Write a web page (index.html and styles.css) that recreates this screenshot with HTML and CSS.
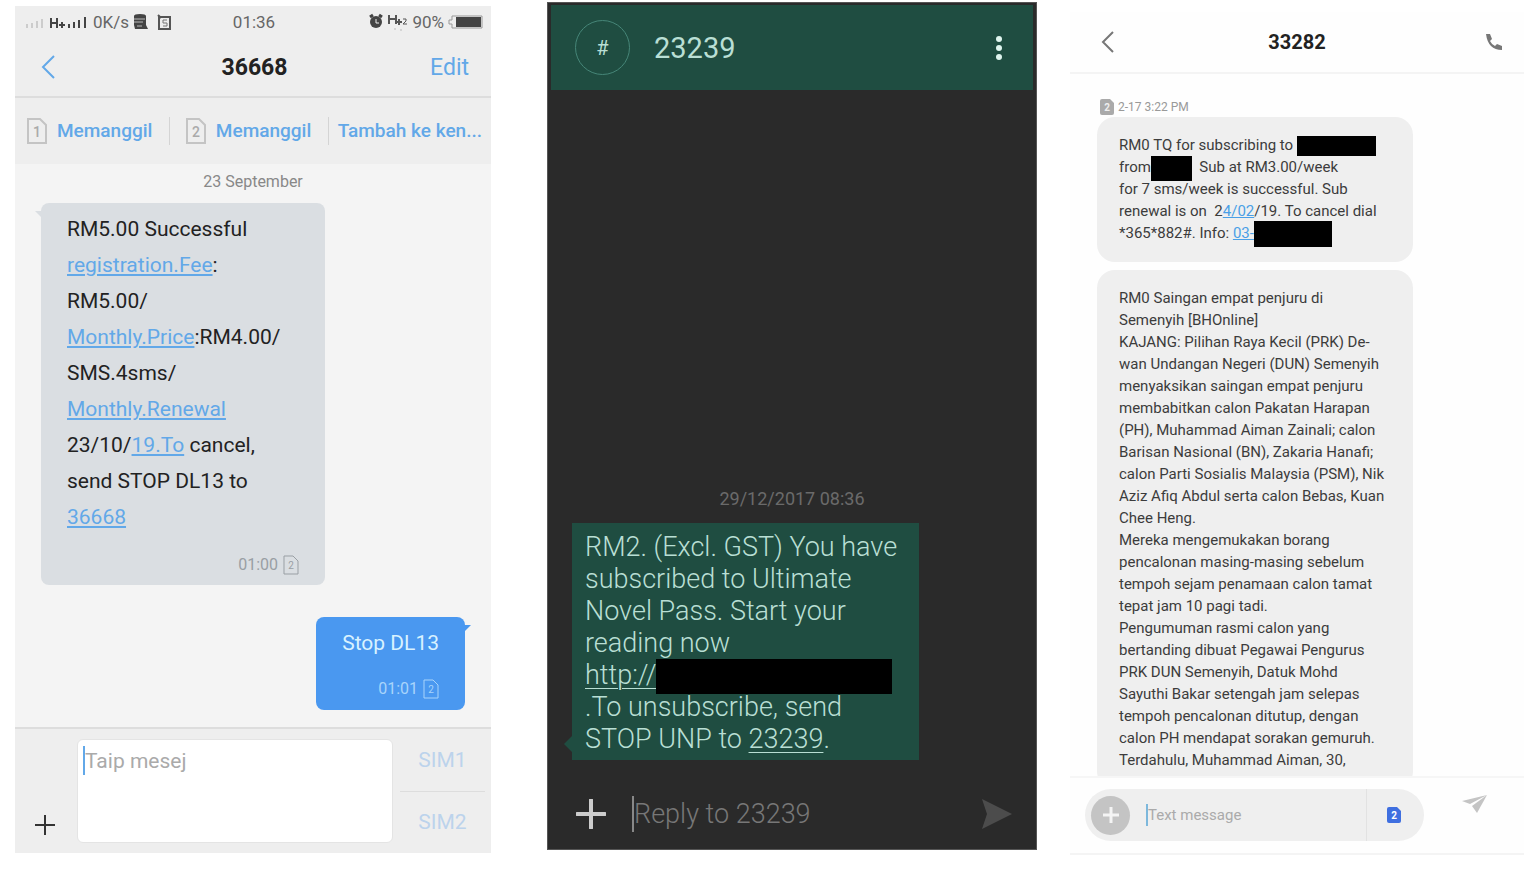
FILE: index.html
```
<!DOCTYPE html>
<html lang="ms">
<head>
    <meta charset="UTF-8">
    <meta name="viewport" content="width=device-width, initial-scale=1.0">
    <title>SMS</title>
    <link rel="stylesheet" href="styles.css">
</head>
<body>
    <main class="phones">

        <!-- 36668 -->
        <section class="phone phone-light">
            <div class="status-bar">
                <div class="status-left">
                    <svg width="64" height="18" viewBox="0 0 64 18">
                        <path d="M2 11v4M7 10v5M12 8v7M17 6v9" stroke="#ccc" stroke-width="2"/>
                        <path d="M26 5v10M32 5v10M26 10h7M37 9v6M34 12h6" stroke="#444" stroke-width="2" fill="none"/>
                        <path d="M44 11v4M49 9v6M54 7v8M60 4v11" stroke="#444" stroke-width="2"/>
                    </svg>
                    <span>0K/s</span>
                    <svg width="38" height="18" viewBox="0 0 38 18">
                        <path d="M1 3q0-2 6-2t6 2v9l2 4H2l-1-4z" fill="#444"/>
                        <path d="M1 6h11M1 9h9M4 13h5" stroke="#bbb" fill="none"/>
                        <path d="M26 4h11v12H26zM25 2l3 3" stroke="#555" stroke-width="2" fill="none"/>
                        <path d="M34 7h-4v3h4v3h-4" stroke="#777" fill="none"/>
                    </svg>
                </div>
                <span>01:36</span>
                <div class="status-right">
                    <svg width="42" height="20" viewBox="0 0 42 20">
                        <circle cx="10" cy="10" r="6" fill="#444"/>
                        <path d="M4 5l3-2M16 5l-3-2" stroke="#444" stroke-width="3"/>
                        <path d="M10 7v4h3" stroke="#eee" fill="none"/>
                        <path d="M23 3v9M30 3v9M23 7h7M33 7v6M31 10h5" stroke="#555" stroke-width="2" fill="none"/>
                        <path d="M37 7h3v2l-3 3h4" stroke="#555" fill="none"/>
                        <path d="M28 17h2M34 18h2" stroke="#bbb"/>
                    </svg>
                    <span>90%</span>
                    <svg width="35" height="14" viewBox="0 0 35 14">
                        <path d="M4 1h30v12H4V9H1V5h3z" fill="#eee" stroke="#999"/>
                        <path d="M8 2h25v10H8z" fill="#444"/>
                    </svg>
                </div>
            </div>
            <header class="light-header">
                <button class="icon-btn" type="button" aria-label="Kembali">
                    <svg width="16" height="26" viewBox="0 0 16 26"><path d="M14 2L3 13l11 11" fill="none" stroke="#62a8e8" stroke-width="2"/></svg>
                </button>
                <h1>36668</h1>
                <button class="edit-btn" type="button">Edit</button>
            </header>
            <nav class="quick-actions">
                <a href="#">
                    <svg width="20" height="26" viewBox="0 0 20 26"><path d="M1 1h12l6 6v18H1z" fill="none" stroke="#c4c4c4" stroke-width="2"/><text x="10" y="19" text-anchor="middle" font-size="14" fill="#aaa">1</text></svg>
                    Memanggil
                </a>
                <a href="#">
                    <svg width="20" height="26" viewBox="0 0 20 26"><path d="M1 1h12l6 6v18H1z" fill="none" stroke="#c4c4c4" stroke-width="2"/><text x="10" y="19" text-anchor="middle" font-size="14" fill="#aaa">2</text></svg>
                    Memanggil
                </a>
                <a href="#">Tambah ke ken...</a>
            </nav>
            <div class="light-chat">
                <p class="light-date">23 September</p>
                <div class="bubble received">
                    <p>RM5.00 Successful<br>
                    <a href="#">registration.Fee</a>:<br>
                    RM5.00/<br>
                    <a href="#">Monthly.Price</a>:RM4.00/<br>
                    SMS.4sms/<br>
                    <a href="#">Monthly.Renewal</a><br>
                    23/10/<a href="#">19.To</a> cancel,<br>
                    send STOP DL13 to<br>
                    <a href="#">36668</a></p>
                    <div class="bubble-time">01:00
                        <svg width="16" height="20" viewBox="0 0 16 20"><path d="M1 1h9l5 5v13H1z" fill="none" stroke="currentColor"/><text x="8" y="14" text-anchor="middle" font-size="10" fill="currentColor">2</text></svg>
                    </div>
                </div>
                <div class="bubble sent">
                    <p>Stop DL13</p>
                    <div class="bubble-time">01:01
                        <svg width="16" height="20" viewBox="0 0 16 20"><path d="M1 1h9l5 5v13H1z" fill="none" stroke="currentColor"/><text x="8" y="14" text-anchor="middle" font-size="10" fill="currentColor">2</text></svg>
                    </div>
                </div>
            </div>
            <form class="light-composer">
                <button class="icon-btn add-btn" type="button" aria-label="Tambah">
                    <svg width="20" height="20" viewBox="0 0 20 20"><path d="M10 0v20M0 10h20" stroke="#333" stroke-width="2"/></svg>
                </button>
                <div class="light-field">
                    <span class="caret"></span>
                    <textarea aria-label="Mesej" placeholder="Taip mesej"></textarea>
                </div>
                <div class="sim-buttons">
                    <button type="button">SIM1</button>
                    <button type="button">SIM2</button>
                </div>
            </form>
        </section>

        <!-- 23239 -->
        <section class="phone phone-dark">
            <header class="dark-header">
                <span class="avatar">#</span>
                <h1>23239</h1>
                <button class="icon-btn" type="button" aria-label="Menu">
                    <svg width="8" height="26" viewBox="0 0 8 26" fill="#dff5ee"><circle cx="4" cy="4" r="3"/><circle cx="4" cy="13" r="3"/><circle cx="4" cy="22" r="3"/></svg>
                </button>
            </header>
            <div class="dark-chat">
                <p class="dark-date">29/12/2017 08:36</p>
                <div class="dark-bubble">
                    RM2. (Excl. GST) You have<br>
                    subscribed to Ultimate<br>
                    Novel Pass. Start your<br>
                    reading now<br>
                    <a href="#">http://</a><span class="redacted redacted-url"></span><br>
                    .To unsubscribe, send<br>
                    STOP UNP to <a href="#">23239</a>.
                </div>
            </div>
            <form class="dark-composer">
                <button class="icon-btn" type="button" aria-label="Add">
                    <svg width="30" height="30" viewBox="0 0 30 30"><path d="M15 1v28M1 15h28" stroke="#ccc" stroke-width="4" stroke-linecap="round"/></svg>
                </button>
                <span class="caret"></span>
                <input type="text" aria-label="Reply" placeholder="Reply to 23239">
                <button class="icon-btn" type="submit" aria-label="Send">
                    <svg width="32" height="30" viewBox="0 0 32 30"><path d="M1 0l30 15L1 30l5-15z" fill="#4c4c4c"/></svg>
                </button>
            </form>
        </section>

        <!-- 33282 -->
        <section class="phone phone-white">
            <header class="white-header">
                <button class="icon-btn back-btn" type="button" aria-label="Back">
                    <svg width="13" height="22" viewBox="0 0 13 22"><path d="M12 1L2 11l10 10" fill="none" stroke="#777" stroke-width="2"/></svg>
                </button>
                <h1>33282</h1>
                <button class="icon-btn call-btn" type="button" aria-label="Call">
                    <svg width="18" height="18" viewBox="0 0 18 18"><path d="M1 1h4l2 5-2 2q2 4 5 5l2-2 5 2v4Q3 17 1 1z" fill="#777"/></svg>
                </button>
            </header>
            <div class="white-chat">
                <p class="stamp">
                    <svg width="14" height="16" viewBox="0 0 14 16"><path d="M2 0h8l4 4v10q0 2-2 2H2q-2 0-2-2V2q0-2 2-2z" fill="#aaa"/><text x="7" y="12" text-anchor="middle" font-size="10" font-weight="bold" fill="#eee">2</text></svg>
                    2-17 3:22 PM
                </p>
                <div class="white-bubble">
                    RM0 TQ for subscribing to<span class="redacted redacted-service"></span><br>
                    from<span class="redacted redacted-sender"></span>&nbsp; Sub at RM3.00/week<br>
                    for 7 sms/week is successful. Sub<br>
                    renewal is on &nbsp;2<a href="#">4/02</a>/19. To cancel dial<br>
                    *365*882#. Info: <a href="#">03-</a><span class="redacted redacted-number"></span>
                </div>
                <div class="white-bubble">
                    RM0 Saingan empat penjuru di<br>
                    Semenyih [BHOnline]<br>
                    KAJANG: Pilihan Raya Kecil (PRK) De-<br>
                    wan Undangan Negeri (DUN) Semenyih<br>
                    menyaksikan saingan empat penjuru<br>
                    membabitkan calon Pakatan Harapan<br>
                    (PH), Muhammad Aiman Zainali; calon<br>
                    Barisan Nasional (BN), Zakaria Hanafi;<br>
                    calon Parti Sosialis Malaysia (PSM), Nik<br>
                    Aziz Afiq Abdul serta calon Bebas, Kuan<br>
                    Chee Heng.<br>
                    Mereka mengemukakan borang<br>
                    pencalonan masing-masing sebelum<br>
                    tempoh sejam penamaan calon tamat<br>
                    tepat jam 10 pagi tadi.<br>
                    Pengumuman rasmi calon yang<br>
                    bertanding dibuat Pegawai Pengurus<br>
                    PRK DUN Semenyih, Datuk Mohd<br>
                    Sayuthi Bakar setengah jam selepas<br>
                    tempoh pencalonan ditutup, dengan<br>
                    calon PH mendapat sorakan gemuruh.<br>
                    Terdahulu, Muhammad Aiman, 30,
                </div>
            </div>
            <form class="white-composer">
                <div class="pill">
                    <button class="round-add" type="button" aria-label="Add">
                        <svg width="18" height="18" viewBox="0 0 18 18"><path d="M9 1v16M1 9h16" stroke="#f4f4f4" stroke-width="3"/></svg>
                    </button>
                    <span class="caret"></span>
                    <input type="text" aria-label="Text message" placeholder="Text message">
                    <button class="icon-btn sim-toggle" type="button" aria-label="SIM 2">
                        <svg width="14" height="16" viewBox="0 0 14 16"><path d="M2 0h8l4 4v10q0 2-2 2H2q-2 0-2-2V2q0-2 2-2z" fill="#3f6fe0"/><text x="7" y="12" text-anchor="middle" font-size="10" font-weight="bold" fill="#fff">2</text></svg>
                    </button>
                </div>
                <button class="icon-btn send-btn" type="submit" aria-label="Send">
                    <svg width="26" height="20" viewBox="0 0 26 20"><path d="M0 7L25 1 8 10z" fill="#c4c4c4"/><path d="M25 1L15 19l-5-7z" fill="#c4c4c4"/></svg>
                </button>
            </form>
        </section>

    </main>
</body>
</html>
```
FILE: styles.css
```
* {
    box-sizing: border-box;
}
body {
    margin: 0;
    background-color: #fff;
    font-family: Roboto, "Liberation Sans", sans-serif;
}
h1, p {
    margin: 0;
}
button, input, textarea {
    font-family: inherit;
    border: none;
    background: none;
    padding: 0;
    outline: none;
}
button {
    cursor: pointer;
}
svg {
    display: block;
    flex-shrink: 0;
}
.phones {
    display: grid;
    grid-template-columns: 499fr 490fr 454fr;
    gap: 33px;
    height: 100vh;
    padding: 0 12px 0 15px;
}
.phone {
    display: flex;
    flex-direction: column;
    min-width: 0;
    min-height: 0;
}
.icon-btn {
    display: flex;
    align-items: center;
    justify-content: center;
}
.caret {
    width: 2px;
    flex-shrink: 0;
}
.redacted {
    display: inline-block;
    background-color: #000;
    vertical-align: middle;
}

/* light phone */
.phone-light {
    margin: 6px 23px 18px 0;
    background-color: #f4f4f4;
}
.status-bar {
    display: grid;
    grid-template-columns: 1fr auto 1fr;
    align-items: center;
    height: 32px;
    padding: 0 8px 0 10px;
    background-color: #eee;
    color: #666;
    font-size: 17px;
}
.status-left, .status-right {
    display: flex;
    align-items: center;
    gap: 4px;
}
.status-right {
    justify-content: flex-end;
}
.light-header {
    display: grid;
    grid-template-columns: 1fr auto 1fr;
    align-items: center;
    height: 60px;
    padding: 0 22px 0 25px;
    background-color: #eee;
    border-bottom: 2px solid #ddd;
}
.light-header h1 {
    font-size: 23px;
    color: #222;
}
.light-header .icon-btn {
    justify-self: start;
}
.edit-btn {
    justify-self: end;
    font-size: 23px;
    color: #62a8e8;
}
.quick-actions {
    display: flex;
    align-items: center;
    justify-content: space-between;
    height: 66px;
    padding: 0 9px 0 12px;
    background-color: #eee;
}
.quick-actions a {
    display: flex;
    align-items: center;
    gap: 10px;
    color: #62a8e8;
    font-size: 19px;
    font-weight: 500;
    line-height: 28px;
    text-decoration: none;
    white-space: nowrap;
}
.quick-actions a + a {
    border-left: 1px solid #d4d4d4;
    padding-left: 9px;
}
.quick-actions a:nth-child(2) {
    padding-left: 16px;
}
.light-chat {
    display: flex;
    flex-direction: column;
    flex: 1;
    min-height: 0;
    padding: 8px 26px;
}
.light-date {
    text-align: center;
    font-size: 16px;
    line-height: 20px;
    color: #888;
    margin-bottom: 11px;
}
.bubble {
    position: relative;
    padding: 8px 26px;
    border-radius: 8px;
    font-size: 21px;
    line-height: 36px;
}
.bubble a {
    color: #62a8e8;
}
.bubble::before {
    content: "";
    position: absolute;
    top: 8px;
    border: 6px solid transparent;
    border-bottom-width: 0;
}
.bubble-time {
    display: flex;
    align-items: center;
    justify-content: flex-end;
    gap: 5px;
    font-size: 16px;
    line-height: 20px;
}
.received {
    align-self: flex-start;
    width: 284px;
    background-color: #dadee2;
    color: #222;
}
.received::before {
    left: -6px;
    border-top-color: #dadee2;
}
.received .bubble-time {
    margin-top: 20px;
    padding-bottom: 2px;
    color: #999fa4;
}
.sent {
    align-self: flex-end;
    margin-top: 32px;
    background-color: #4a98f0;
    color: #d8f2ff;
}
.sent::before {
    right: -6px;
    border-top-color: #4a98f0;
}
.sent .bubble-time {
    margin-top: 18px;
    padding-bottom: 3px;
    color: #a8d4fb;
}
.light-composer {
    display: flex;
    height: 126px;
    padding: 0 6px 0 20px;
    background-color: #eee;
    border-top: 2px solid #ddd;
}
.add-btn {
    align-self: flex-end;
    margin-bottom: 18px;
}
.light-field {
    display: flex;
    flex: 1;
    margin: 10px 7px 10px 22px;
    padding: 6px 5px;
    background-color: #fff;
    border: 1px solid #e4e4e4;
    border-radius: 6px;
}
.light-field .caret {
    height: 29px;
    background-color: #62a8e8;
}
.light-field textarea {
    flex: 1;
    min-width: 0;
    resize: none;
    font-size: 21px;
    line-height: 30px;
}
.light-field textarea::placeholder {
    color: #aaa;
}
.sim-buttons {
    display: flex;
    flex-direction: column;
    width: 85px;
}
.sim-buttons button {
    flex: 1;
    font-size: 21px;
    color: #bcd3ec;
}
.sim-buttons button + button {
    border-top: 1px solid #ddd;
}

/* dark phone */
.phone-dark {
    margin: 2px 0 21px;
    padding: 2px 3px;
    background-color: #2a2a2a;
    border: 1px solid #555;
}
.dark-header {
    display: flex;
    align-items: center;
    height: 85px;
    padding: 0 30px 0 24px;
    background-color: #1f4d41;
}
.avatar {
    display: flex;
    align-items: center;
    justify-content: center;
    width: 55px;
    height: 55px;
    border: 1px solid #468678;
    border-radius: 50%;
    color: #b9dfd4;
    font-size: 20px;
}
.dark-header h1 {
    flex: 1;
    margin-left: 24px;
    font-size: 29px;
    font-weight: 400;
    color: #b9dfd4;
}
.dark-chat {
    display: flex;
    flex-direction: column;
    justify-content: flex-end;
    flex: 1;
    min-height: 0;
    padding: 0 21px 21px;
}
.dark-date {
    margin-bottom: 14px;
    text-align: center;
    font-size: 18px;
    line-height: 20px;
    color: #6a6a6a;
}
.dark-bubble {
    position: relative;
    align-self: flex-start;
    width: 347px;
    padding: 8px 13px 5px;
    background-color: #1f4d41;
    color: #b9dfd4;
    font-size: 27px;
    font-weight: 300;
    line-height: 32px;
    white-space: nowrap;
}
.dark-bubble::before {
    content: "";
    position: absolute;
    left: -8px;
    bottom: 8px;
    border: 8px solid transparent;
    border-left-width: 0;
    border-right-color: #1f4d41;
}
.dark-bubble a {
    color: inherit;
    text-decoration-thickness: 1px;
    text-underline-offset: 4px;
}
.redacted-url {
    width: 236px;
    height: 35px;
    margin: -3px 0;
}
.dark-composer {
    display: flex;
    align-items: center;
    height: 66px;
    padding: 0 20px 0 25px;
}
.dark-composer .caret {
    height: 36px;
    margin-left: 26px;
    background-color: #888;
}
.dark-composer input {
    flex: 1;
    min-width: 0;
    font-size: 27px;
    font-weight: 300;
}
.dark-composer input::placeholder {
    color: #777;
}

/* white phone */
.phone-white {
    margin: 12px 0 16px;
    background-color: #fefefe;
    border-bottom: 2px solid #f4f4f4;
}
.white-header {
    display: grid;
    grid-template-columns: 1fr auto 1fr;
    align-items: center;
    height: 62px;
    border-bottom: 2px solid #f4f4f4;
}
.white-header h1 {
    font-size: 20px;
    color: #222;
}
.back-btn {
    justify-self: start;
    margin-left: 31px;
}
.call-btn {
    justify-self: end;
    margin-right: 21px;
}
.white-chat {
    flex: 1;
    min-height: 0;
    overflow: hidden;
    padding: 25px 27px 0;
}
.stamp {
    display: flex;
    align-items: center;
    gap: 4px;
    padding-left: 3px;
    margin-bottom: 2px;
    font-size: 12px;
    line-height: 16px;
    color: #999;
}
.white-bubble {
    width: 316px;
    margin-bottom: 8px;
    padding: 17px 22px 18px;
    background-color: #efefef;
    border-radius: 18px;
    color: #3c3c3c;
    font-size: 15px;
    line-height: 22px;
    white-space: nowrap;
}
.white-bubble a {
    color: #4a9fe6;
}
.redacted-service {
    width: 79px;
    height: 20px;
    margin: -3px 0 -3px 4px;
}
.redacted-sender {
    width: 41px;
    height: 25px;
    margin: -3px 0;
}
.redacted-number {
    width: 78px;
    height: 26px;
    margin: -4px 0;
}
.white-composer {
    display: flex;
    align-items: flex-start;
    height: 77px;
    padding: 11px 36px 0 15px;
    border-top: 2px solid #f6f6f6;
}
.pill {
    display: flex;
    align-items: center;
    flex: 1;
    height: 52px;
    padding-left: 6px;
    background-color: #efefef;
    border-radius: 26px;
}
.round-add {
    display: flex;
    align-items: center;
    justify-content: center;
    width: 39px;
    height: 39px;
    border-radius: 50%;
    background-color: #c4c4c4;
}
.pill .caret {
    height: 22px;
    margin-left: 16px;
    background-color: #7db8dc;
}
.pill input {
    flex: 1;
    min-width: 0;
    font-size: 15px;
}
.pill input::placeholder {
    color: #aaa;
}
.sim-toggle {
    height: 52px;
    padding: 0 23px 0 20px;
    border-left: 1px solid #e2e2e2;
}
.send-btn {
    margin: 5px 0 0 38px;
}
```
